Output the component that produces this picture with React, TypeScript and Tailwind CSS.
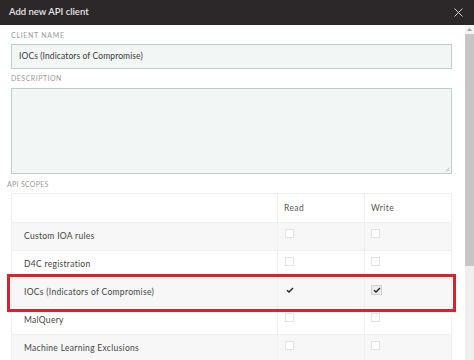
import React from "react";

const rows = [
  { name: "Custom IOA rules", read: false, write: false },
  { name: "D4C registration", read: false, write: false },
  { name: "IOCs (Indicators of Compromise)", read: true, write: true, highlight: true },
  { name: "MalQuery", read: false, write: false },
  { name: "Machine Learning Exclusions", read: false, write: false },
];

function Check() {
  return (
    <svg width="8" height="6" viewBox="0 0 8 6" className="block">
      <path d="M1 3.2 L3 5 L7 1" fill="none" stroke="#222" strokeWidth="1.4" />
    </svg>
  );
}

function Box({ checked, boxed }: { checked: boolean; boxed?: boolean }) {
  if (checked && !boxed) {
    return (
      <div className="w-[9px] h-[9px] flex items-center justify-center">
        <Check />
      </div>
    );
  }
  if (checked) {
    return (
      <div className="w-[11px] h-[10px] border border-[#d0d0d0] bg-[#ececec] flex items-center justify-center">
        <Check />
      </div>
    );
  }
  return <div className="w-[9px] h-[9px] border border-[#e2e2e2] bg-white" />;
}

export default function App() {
  return (
    <div
      className="w-[474px] h-[360px] overflow-hidden bg-white flex flex-col"
      style={{ fontFamily: "Lato, 'Liberation Sans', sans-serif" }}
    >
      <div className="h-[25px] bg-[#2c2729] flex items-center justify-between pl-[9px] pr-[11px] shrink-0">
        <span className="text-[9.5px] font-semibold text-[#e6e6e6]">Add new API client</span>
        <svg width="9" height="9" viewBox="0 0 9 9">
          <path d="M0.5 0.5 L8.5 8.5 M8.5 0.5 L0.5 8.5" stroke="#cfcfcf" strokeWidth="1" />
        </svg>
      </div>
      <div className="flex flex-1 min-h-0">
        <div className="flex-1 pl-[11px] pr-[13px] relative">
          <div className="h-[19px] pt-[7px] text-[7px] tracking-[0.7px] text-[#9a9a9a] leading-[7px]">CLIENT NAME</div>
          <div className="h-[25px] border border-[#bcd0c9] bg-[#f2f6f5] flex items-center pl-[7px] text-[8.5px] tracking-[0.1px] text-[#3a3a3a]">
            IOCs (Indicators of Compromise)
          </div>
          <div className="h-[19px] pt-[6px] text-[7px] tracking-[0.5px] text-[#9a9a9a] leading-[7px]">DESCRIPTION</div>
          <div className="h-[86px] border border-[#bcd0c9] bg-[#f2f6f5] relative">
            <svg width="5" height="5" viewBox="0 0 5 5" className="absolute right-[1px] bottom-[1px]">
              <path d="M4.5 0.5 L0.5 4.5 M4.5 2.5 L2.5 4.5" stroke="#aaa" strokeWidth="0.7" />
            </svg>
          </div>
          <div className="h-[19px] pt-[7px] -ml-[4px] text-[7px] tracking-[0.3px] text-[#9a9a9a] leading-[7px]">API SCOPES</div>
          <div className="border border-[#efefef]">
            <div className="grid grid-cols-[265px_87px_1fr] h-[28px] text-[8.5px] tracking-[0.4px] text-[#555]">
              <div />
              <div className="border-l border-[#efefef] flex items-center pl-[6px]">Read</div>
              <div className="border-l border-[#efefef] flex items-center pl-[6px]">Write</div>
            </div>
            {rows.map((r, i) => (
              <div
                key={r.name}
                className={
                  "grid grid-cols-[265px_87px_1fr] h-[28px] border-t border-[#efefef] text-[8.5px] tracking-[0.3px] text-[#444] " +
                  (i % 2 === 0 ? "bg-[#f7f7f7]" : "bg-white")
                }
              >
                <div className="flex items-center pl-[12px]">{r.name}</div>
                <div className="border-l border-[#efefef] flex items-center pl-[7px]">
                  <div className="-mt-[6px]">
                    <Box checked={r.read} />
                  </div>
                </div>
                <div className="border-l border-[#efefef] flex items-center pl-[6px]">
                  <div className="-mt-[6px]">
                    <Box checked={r.write} boxed />
                  </div>
                </div>
              </div>
            ))}
          </div>
          <div className="absolute left-[7px] top-[249px] w-[449px] h-[38px] border-[3px] border-[#d8222e] pointer-events-none" />
        </div>
        <div className="w-[9px] bg-[#efefef] flex flex-col shrink-0">
          <div className="h-[9px] flex items-center justify-center bg-[#f4f4f4]">
            <svg width="5" height="3" viewBox="0 0 5 3">
              <path d="M0 3 L2.5 0 L5 3 Z" fill="#a0a0a0" />
            </svg>
          </div>
          <div className="h-[232px] bg-[#c6c6c6]" />
        </div>
      </div>
    </div>
  );
}
